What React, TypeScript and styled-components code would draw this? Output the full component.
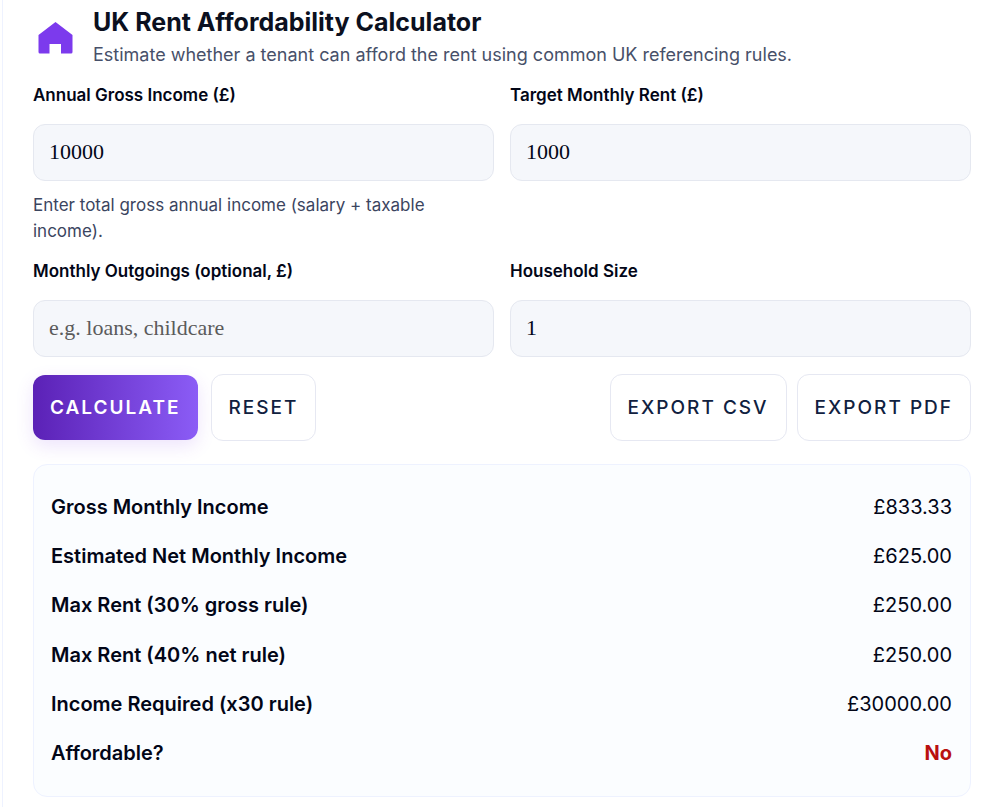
import React, { useState } from "react";
import styled, { createGlobalStyle } from "styled-components";

const GlobalStyle = createGlobalStyle`
  *, *::before, *::after { box-sizing: border-box; }
  body {
    margin: 0;
    background: #ffffff;
    color: #020617;
    font-family: Inter, "Liberation Sans", sans-serif;
    font-size: 20px;
  }
`;

const Card = styled.main`
  min-height: 100vh;
  margin-left: 2px;
  padding: 4px 16px 10px 30px;
  border-left: 1px solid #eef2ff;
  background: #ffffff;
`;

const Header = styled.header`
  display: flex;
  align-items: center;
  gap: 16px;
`;

const Logo = styled.svg`
  flex: none;
  width: 44px;
  height: 44px;
  fill: #7c3aed;
`;

const Title = styled.h1`
  margin: 0;
  font-size: 25px;
  line-height: 36px;
  font-weight: 700;
  color: #0b1020;
`;

const Subtitle = styled.p`
  margin: 0;
  font-size: 18px;
  line-height: 30px;
  font-weight: 400;
  color: #475069;
`;

const Fields = styled.div`
  display: grid;
  grid-template-columns: 1fr 1fr;
  gap: 14px 16px;
  margin-top: 12px;
`;

const Field = styled.div`
  display: flex;
  flex-direction: column;
`;

const Label = styled.label`
  margin-bottom: 16px;
  font-size: 17px;
  line-height: 26px;
  font-weight: 600;
`;

const Input = styled.input`
  width: 100%;
  height: 57px;
  padding: 0 15px 2px;
  border: 1px solid #e5e8f0;
  border-radius: 12px;
  background: #f5f7fb;
  color: #020617;
  font-family: "Liberation Serif", serif;
  font-size: 22px;
  outline: none;

  &::placeholder { color: #5b5b5b; opacity: 1; }
  &:focus-visible { border-color: #8b5cf6; }
`;

const Help = styled.p`
  margin: 11px 0 0;
  padding-right: 16px;
  font-size: 17px;
  line-height: 26px;
  font-weight: 400;
  color: #3b455f;
`;

const Actions = styled.div`
  display: flex;
  flex-wrap: wrap;
  align-items: center;
  justify-content: space-between;
  gap: 10px;
  margin-top: 17px;
`;

const ButtonGroup = styled.div<{ $gap: number }>`
  display: flex;
  align-items: center;
  gap: ${(p) => p.$gap}px;
`;

const Button = styled.button<{ $primary?: boolean }>`
  height: ${(p) => (p.$primary ? "65px" : "67px")};
  padding: 0 17px;
  border: ${(p) => (p.$primary ? "0" : "1px solid #e6e8f2")};
  border-radius: 12px;
  background: ${(p) => (p.$primary ? "linear-gradient(90deg, #5b21b6, #8b5cf6)" : "#ffffff")};
  box-shadow: ${(p) => (p.$primary ? "0 6px 18px rgba(124, 58, 237, 0.14)" : "none")};
  color: ${(p) => (p.$primary ? "#ffffff" : "#10213f")};
  font-family: inherit;
  font-size: 19px;
  font-weight: ${(p) => (p.$primary ? 600 : 500)};
  letter-spacing: 2px;
  text-transform: uppercase;
  cursor: pointer;
`;

const Results = styled.section`
  margin-top: 23px;
  padding: 17px 18px 18px 17px;
  border: 1px solid #eef2ff;
  border-radius: 14px;
  background: #fbfdff;
`;

const ResultTable = styled.table`
  width: 100%;
  height: 296px;
  border-collapse: collapse;
  line-height: 30px;
`;

const Name = styled.th`
  padding: 0;
  font-weight: 600;
  text-align: left;
`;

const Value = styled.td<{ $tone?: "bad" | "good" }>`
  padding: 0;
  text-align: right;
  font-weight: ${(p) => (p.$tone ? 700 : 400)};
  color: ${(p) => (p.$tone === "bad" ? "#b91010" : p.$tone === "good" ? "#15803d" : "inherit")};
`;

const initial = { income: "10000", rent: "1000", outgoings: "", household: "1" };
type Form = typeof initial;

const money = (n: number) => `£${n.toFixed(2)}`;

function calculate(form: Form) {
  const gross = Number(form.income) / 12;
  const net = gross * 0.75 - Number(form.outgoings);
  const rent = Number(form.rent);
  const grossMax = gross * 0.3;
  const netMax = net * 0.4;
  return {
    rows: [
      ["Gross Monthly Income", money(gross)],
      ["Estimated Net Monthly Income", money(net)],
      ["Max Rent (30% gross rule)", money(grossMax)],
      ["Max Rent (40% net rule)", money(netMax)],
      ["Income Required (x30 rule)", money(rent * 30)],
    ],
    affordable: rent <= Math.min(grossMax, netMax),
  };
}

export default function App() {
  const [form, setForm] = useState<Form>(initial);
  const [result, setResult] = useState(() => calculate(initial));

  const bind = (key: keyof Form) => ({
    id: key,
    value: form[key],
    inputMode: "numeric" as const,
    onChange: (e: React.ChangeEvent<HTMLInputElement>) => setForm({ ...form, [key]: e.target.value }),
  });

  const submit = (e: React.FormEvent) => {
    e.preventDefault();
    setResult(calculate(form));
  };

  return (
    <>
      <GlobalStyle />
      <Card>
        <Header>
          <Logo viewBox="0 0 44 44" aria-hidden="true">
            <path d="M22.5 7 39.5 20V37Q39.5 38.5 38 38.5H28V29H16.5V38.5H7Q5.5 38.5 5.5 37V20Z" />
          </Logo>
          <div>
            <Title>UK Rent Affordability Calculator</Title>
            <Subtitle>Estimate whether a tenant can afford the rent using common UK referencing rules.</Subtitle>
          </div>
        </Header>
        <form onSubmit={submit}>
          <Fields>
            <Field>
              <Label htmlFor="income">Annual Gross Income (£)</Label>
              <Input {...bind("income")} aria-describedby="income-help" />
              <Help id="income-help">Enter total gross annual income (salary + taxable income).</Help>
            </Field>
            <Field>
              <Label htmlFor="rent">Target Monthly Rent (£)</Label>
              <Input {...bind("rent")} />
            </Field>
            <Field>
              <Label htmlFor="outgoings">Monthly Outgoings (optional, £)</Label>
              <Input {...bind("outgoings")} placeholder="e.g. loans, childcare" />
            </Field>
            <Field>
              <Label htmlFor="household">Household Size</Label>
              <Input {...bind("household")} />
            </Field>
          </Fields>
          <Actions>
            <ButtonGroup $gap={13}>
              <Button type="submit" $primary>Calculate</Button>
              <Button type="button" onClick={() => setForm(initial)}>Reset</Button>
            </ButtonGroup>
            <ButtonGroup $gap={10}>
              <Button type="button">Export CSV</Button>
              <Button type="button">Export PDF</Button>
            </ButtonGroup>
          </Actions>
        </form>
        <Results aria-live="polite">
          <ResultTable>
            <tbody>
              {result.rows.map(([name, value]) => (
                <tr key={name}>
                  <Name scope="row">{name}</Name>
                  <Value>{value}</Value>
                </tr>
              ))}
              <tr>
                <Name scope="row">Affordable?</Name>
                <Value $tone={result.affordable ? "good" : "bad"}>{result.affordable ? "Yes" : "No"}</Value>
              </tr>
            </tbody>
          </ResultTable>
        </Results>
      </Card>
    </>
  );
}
